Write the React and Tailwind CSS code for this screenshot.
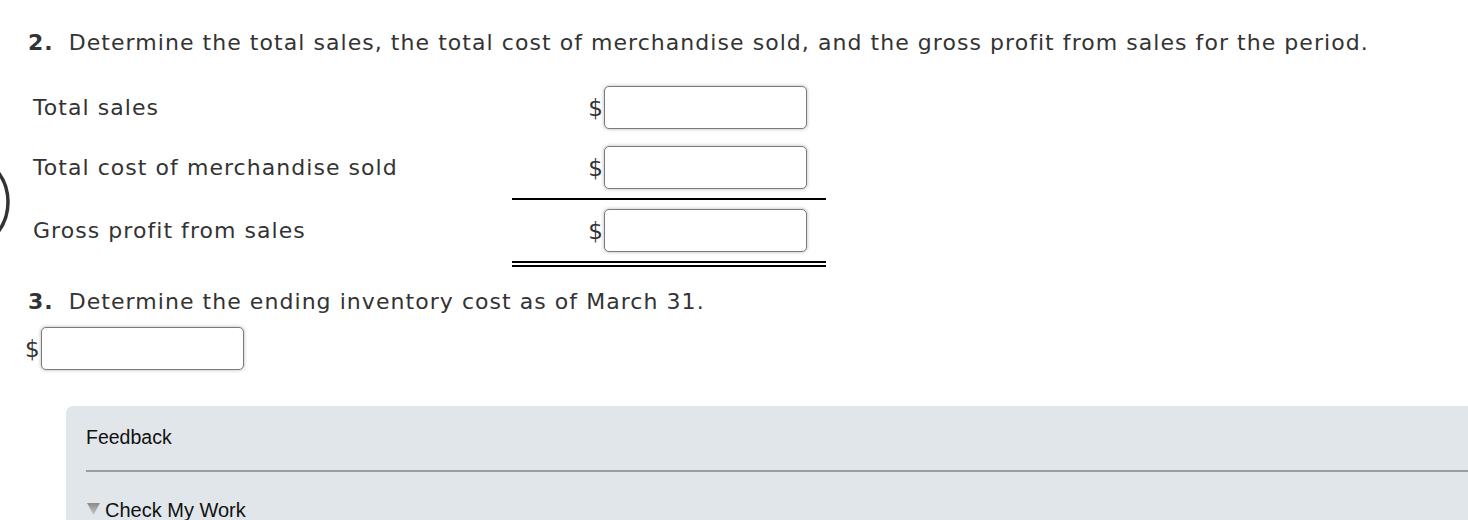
import React from "react";

function MoneyInput() {
  return (
    <div className="flex items-center">
      <span className="text-[23px] leading-[24px] mr-[1px]">$</span>
      <div className="w-[203px] h-[43px] bg-white rounded-[5px] border-[1.5px] border-[#7a7a7a] shadow-[0_0_3px_1px_rgba(0,0,0,0.18)]" />
    </div>
  );
}

function Row({ label, top = "" }) {
  return (
    <div className={`flex items-center ${top}`}>
      <div className="w-[512px] pl-[33px] text-[22px] leading-[26px] tracking-[1.05px]">{label}</div>
      <div className="w-[314px] flex justify-end pr-[19px]">
        <MoneyInput />
      </div>
    </div>
  );
}

export default function App() {
  return (
    <div
      className="relative w-[1468px] h-[520px] overflow-hidden bg-white text-[#333]"
      style={{ fontFamily: '"DejaVu Sans", Verdana, sans-serif' }}
    >
      <svg className="absolute left-0 top-[140px]" width="20" height="130" viewBox="0 0 20 130">
        <circle cx="-42" cy="62" r="50" fill="none" stroke="#333" strokeWidth="3.5" />
      </svg>

      <div className="pt-[30px] pl-[28px] text-[22px] leading-[26px] tracking-[1.05px]">
        <span className="font-bold">2.</span>
        <span className="ml-[15px]">Determine the total sales, the total cost of merchandise sold, and the gross profit from sales for the period.</span>
      </div>

      <div className="mt-[30px]">
        <Row label="Total sales" />
        <Row label="Total cost of merchandise sold" top="mt-[17px]" />
        <div className="ml-[512px] w-[314px] h-[2px] bg-black mt-[9px]" />
        <Row label="Gross profit from sales" top="mt-[9px]" />
        <div className="ml-[512px] w-[314px] mt-[9px]">
          <div className="h-[2px] bg-black" />
          <div className="h-[2px] bg-white" />
          <div className="h-[2px] bg-black" />
        </div>
      </div>

      <div className="mt-[22px] pl-[28px] text-[22px] leading-[26px] tracking-[1.05px]">
        <span className="font-bold">3.</span>
        <span className="ml-[15px]">Determine the ending inventory cost as of March 31.</span>
      </div>

      <div className="mt-[12px] pl-[25px]">
        <MoneyInput />
      </div>

      <div
        className="mt-[36px] ml-[66px] h-[200px] bg-[#e1e6ea] rounded-tl-[7px] pt-[20px] pl-[20px] text-[#111]"
        style={{ fontFamily: '"Liberation Sans", Arial, sans-serif' }}
      >
        <div className="text-[19.5px] leading-[22px]">Feedback</div>
        <div className="mt-[22px] h-[2px] bg-[#999da1]" />
        <div className="mt-[27px] flex items-center text-[20px] leading-[22px]">
          <svg width="15" height="14" viewBox="0 0 15 14" className="mr-[4px] -mt-[2px]">
            <defs>
              <linearGradient id="tg" x1="0" y1="0" x2="0" y2="1">
                <stop offset="0" stopColor="#8a8a8a" />
                <stop offset="1" stopColor="#c8c8c8" />
              </linearGradient>
            </defs>
            <polygon points="1,1 14,1 7.5,13" fill="url(#tg)" />
          </svg>
          <span>Check My Work</span>
        </div>
      </div>
    </div>
  );
}
